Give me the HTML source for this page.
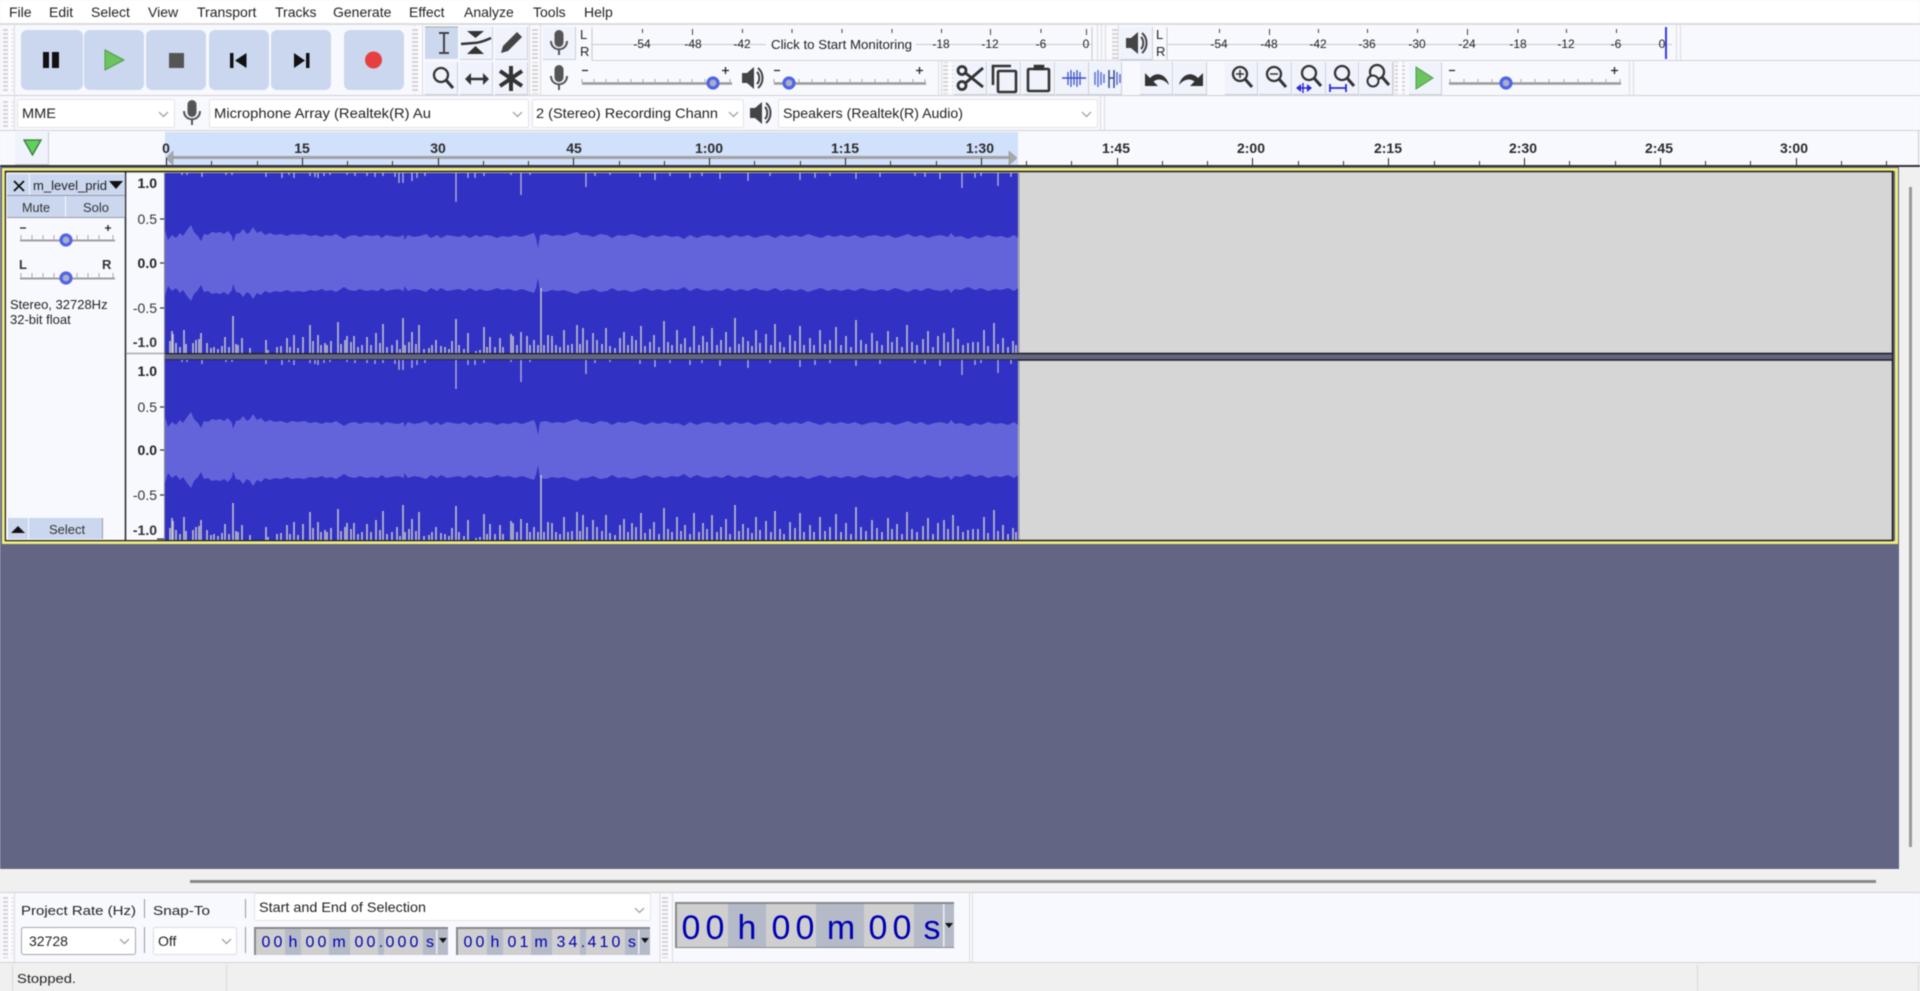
<!DOCTYPE html>
<html><head><meta charset="utf-8"><title>Audacity</title>
<style>
html,body{margin:0;padding:0;background:#f0f0f0;overflow:hidden}
svg{display:block;position:absolute;left:0;top:0;filter:blur(.4px)}
text{font-family:"Liberation Sans",sans-serif;fill:#222;font-size:13px}
.m{font-size:14px;fill:#222}
.t{font-size:14px;font-weight:bold;fill:#2a2a2a;text-anchor:middle}
.v{font-size:14px;fill:#333;text-anchor:end}
.vb{font-size:14px;fill:#222;font-weight:bold;text-anchor:end}
.mt{font-size:12px;fill:#222;text-anchor:middle}
.c{font-size:14px;fill:#222}
.d{font-size:16px;fill:#0000b4;text-anchor:middle}
.b{font-size:34px;fill:#0000b4;text-anchor:middle}
</style></head><body>
<svg width="1920" height="991" viewBox="0 0 1920 991" xmlns="http://www.w3.org/2000/svg">
<defs>
<pattern id="gr" width="10" height="4" patternUnits="userSpaceOnUse"><rect width="10" height="4" fill="#fbfbfd"/><rect x="2" y="1" width="6" height="2" fill="#d4d4d8"/></pattern>
<g id="btn"><rect width="33" height="33" fill="#f0f3fc"/><path d="M0 32.5H33M32.500 0V33" stroke="#ccd0d8" fill="none"/></g>
<g id="mic"><rect x="-4.500" y="-13" width="9" height="17" rx="4.500" fill="#555"/><path d="M-8 -2C-8 9 8 9 8 -2M0 6V12" stroke="#555" stroke-width="2" fill="none"/></g>
<g id="spk"><path d="M-10 -5H-5L2 -11V11L-5 5H-10Z" fill="#444"/><path d="M5 -6C8 -3 8 3 5 6M6 -10C12 -5 12 5 6 10" stroke="#444" stroke-width="2" fill="none"/></g>
<g id="thumb"><circle r="5" fill="#a8aecb" stroke="#5064e6" stroke-width="3.200"/></g>
<g id="zm"><circle cx="-2" cy="-3" r="7" fill="none" stroke="#333" stroke-width="2.300"/><path d="M3 2L10 10" stroke="#333" stroke-width="3"/></g>
<path id="chev" d="M0 0L4.500 4.500L9 0" fill="none" stroke="#999" stroke-width="1.200"/>
<path id="band" d="M165 263V230L168 240L172 235L176 238L180 233L183 236L187 230L191 225L194 232L198 236L201 241L204 234L208 235L212 232L216 233L220 232L224 234L228 231L232 236L233 242L236 234L240 233L243 229L247 234L250 232L253 227L257 233L261 231L265 235L270 233L275 235L281 234L287 236L292 234L298 235L304 234L310 236L316 235L322 237L326 235L331 236L336 234L341 237L344 239L349 236L355 235L360 237L366 235L372 236L378 235L382 238L386 235L391 236L398 237L404 235L404 240L408 235L414 237L420 236L426 234L431 238L437 235L441 238L447 235L453 236L459 237L464 235L470 238L476 235L480 237L486 235L492 236L497 238L502 236L509 237L515 235L522 237L528 235L534 233L536 238L538 248L540 235L546 234L552 236L558 235L564 236L570 234L577 232L581 235L587 235L593 237L600 234L607 235L612 238L618 235L625 236L632 234L639 236L645 238L652 235L658 237L665 235L672 237L678 236L684 239L690 235L697 238L702 236L708 235L715 237L722 235L728 238L735 235L741 237L748 235L755 238L761 236L768 235L775 238L781 235L788 237L795 235L801 237L808 234L814 236L821 238L828 235L834 237L841 235L848 237L855 235L862 238L868 236L875 235L882 237L888 235L895 238L902 236L908 234L915 237L921 235L928 238L934 236L941 235L948 237L951 233L955 237L961 236L968 239L975 236L981 238L988 235L995 237L1001 236L1008 238L1014 235L1018 238V263Z"/>
<path id="sp" d="M172 331V353M173 334V353M170 341V353M176 343V353M180 347V353M184 330V353M186 344V353M193 343V353M196 340V353M199 339V353M201 333V353M207 343V353M211 348V353M214 347V353M218 349V353M222 346V353M225 337V353M229 347V353M233 316V353M236 344V353M238 345V353M242 338V353M250 348V353M266 340V353M268 350V353M277 347V353M281 346V353M287 338V353M290 347V353M294 335V353M298 348V353M303 337V353M310 325V353M313 341V353M318 335V353M321 345V353M325 343V353M327 345V353M331 341V353M338 322V353M341 344V353M345 340V353M347 336V353M351 342V353M354 336V353M358 347V353M362 345V353M367 337V353M371 345V353M376 333V353M380 343V353M383 324V353M387 347V353M392 345V353M397 340V353M400 349V353M403 318V353M405 345V353M409 342V353M412 332V353M416 344V353M419 325V353M424 349V353M429 348V353M432 345V353M436 340V353M441 346V353M445 347V353M449 349V353M452 341V353M456 319V353M459 345V353M464 349V353M468 333V353M476 351V353M480 350V353M484 327V353M487 347V353M490 337V353M495 347V353M500 338V353M503 347V353M511 334V353M513 336V353M517 345V353M521 332V353M527 336V353M530 345V353M534 340V353M538 345V353M541 288V353M544 345V353M548 335V353M552 336V353M556 345V353M560 347V353M564 330V353M568 345V353M572 344V353M577 325V353M580 344V353M583 328V353M587 340V353M593 333V353M597 340V353M602 344V353M606 328V353M610 346V353M615 348V353M620 338V353M624 332V353M628 345V353M632 336V353M636 340V353M641 326V353M645 346V353M650 342V353M654 335V353M659 347V353M664 321V353M668 342V353M672 345V353M677 330V353M681 344V353M685 338V353M690 347V353M694 326V353M699 345V353M703 336V353M707 342V353M712 328V353M717 345V353M721 340V353M726 332V353M730 347V353M735 318V353M739 344V353M743 337V353M748 341V353M752 346V353M756 330V353M760 343V353M766 334V353M771 345V353M775 324V353M780 342V353M784 347V353M790 335V353M795 341V353M800 326V353M804 345V353M810 338V353M814 345V353M820 330V353M825 344V353M830 340V353M836 327V353M841 345V353M846 336V353M851 347V353M856 320V353M861 340V353M866 344V353M872 333V353M877 341V353M882 345V353M888 331V353M892 342V353M897 337V353M902 347V353M907 325V353M912 342V353M917 345V353M923 339V353M928 331V353M933 347V353M938 336V353M944 333V353M948 342V353M953 328V353M958 339V353M963 345V353M968 343V353M973 342V353M978 342V353M984 330V353M988 346V353M994 323V353M998 344V353M1003 338V353M1008 347V353M1013 341V353M1016 345V353"/>
<path id="st" d="M182 173V175M187 173V175M202 173V177M226 173V175M232 173V175M266 173V177M282 173V178M289 173V175M294 173V178M310 173V176M315 173V177M318 173V178M324 173V176M330 173V175M347 173V175M355 173V176M367 173V176M375 173V177M383 173V176M395 173V177M399 173V183M403 173V183M412 173V181M417 173V178M425 173V176M456 173V202M468 173V178M475 173V178M484 173V176M511 173V175M521 173V195M530 173V175M586 173V187M595 173V176M610 173V175M640 173V177M655 173V180M670 173V176M690 173V178M702 173V176M720 173V179M748 173V181M770 173V176M800 173V180M815 173V178M830 173V176M856 173V179M880 173V177M915 173V176M925 173V177M940 173V179M962 173V188M975 173V178M981 173V176M998 173V186M1011 173V177"/>
<g id="ch"><rect x="165" y="173" width="853" height="180" fill="#3131c4"/><use href="#band" fill="#6464da"/><use href="#band" fill="#6464da" transform="matrix(1 0 0 -1 0 526)"/><use href="#sp" stroke="#c9c9c9" stroke-width="1.500" fill="none"/><use href="#st" stroke="#b6b6dc" stroke-width="1.300" fill="none"/></g>
</defs>

<!-- base -->
<rect width="1920" height="991" fill="#f0f0f0"/>
<rect width="1920" height="23" fill="#fff"/>
<rect y="23" width="1920" height="2" fill="#dcdcdc"/>
<text class="m" x="9" y="17">File</text><text class="m" x="49" y="17">Edit</text><text class="m" x="91" y="17">Select</text><text class="m" x="148" y="17">View</text><text class="m" x="197" y="17">Transport</text><text class="m" x="275" y="17">Tracks</text><text class="m" x="333" y="17">Generate</text><text class="m" x="409" y="17">Effect</text><text class="m" x="464" y="17">Analyze</text><text class="m" x="533" y="17">Tools</text><text class="m" x="584" y="17">Help</text>

<!-- toolbars background -->
<rect y="25" width="1920" height="105" fill="#f8f9ff"/>
<path d="M0 95.500H1920M0 130.500H1920M592 60.500H1920" stroke="#d2d2d2"/>
<path d="M414.500 25V95M422.500 25V95M529.500 25V95M540.500 25V95M1097.500 25V60M1101.500 25V60M1105.500 25V60M1118.500 25V60M1680.500 25V60M1676.500 25V60M938.500 60V95M941.500 60V95M1393.500 60V95M1629.500 60V95M1633.500 60V95M1100.500 96V130M1104.500 96V130M14.500 25V130" stroke="#dcdcdc"/>
<rect x="3" y="27" width="10" height="66" fill="url(#gr)"/><rect x="3" y="99" width="10" height="28" fill="url(#gr)"/>
<rect x="412" y="27" width="10" height="66" fill="url(#gr)"/>
<rect x="530" y="27" width="10" height="32" fill="url(#gr)"/><rect x="530" y="62" width="10" height="32" fill="url(#gr)"/>
<rect x="1108" y="27" width="10" height="32" fill="url(#gr)"/><rect x="943" y="62" width="10" height="32" fill="url(#gr)"/><rect x="1395" y="62" width="10" height="32" fill="url(#gr)"/>

<!-- transport -->
<g fill="#cbd7ef"><rect x="21" y="30" width="62" height="60" rx="6"/><rect x="84" y="30" width="60" height="60" rx="6"/><rect x="146" y="30" width="60" height="60" rx="6"/><rect x="209" y="30" width="60" height="60" rx="6"/><rect x="271" y="30" width="60" height="60" rx="6"/><rect x="344" y="30" width="60" height="60" rx="6"/></g>
<path d="M43 52h6v16h-6zM52 52h7v16h-7z" fill="#111"/>
<path d="M105 50L124 60L105 70Z" fill="#6cc460" stroke="#4f9c48"/>
<rect x="169" y="53" width="15" height="15" fill="#555"/>
<path d="M230 53h3.500v15h-3.500zM246.500 53v15L235 60.500Z" fill="#111"/>
<path d="M294 53v15L305 60.500ZM306 53h3.500v15H306z" fill="#111"/>
<circle cx="373.500" cy="60" r="8.500" fill="#e5403f"/>

<!-- tools -->
<rect x="425" y="27" width="33" height="32" fill="#ccd8ee"/><path d="M425 27H458" stroke="#aaa"/>
<use href="#btn" x="460" y="27"/><use href="#btn" x="495" y="27"/><use href="#btn" x="425" y="62"/><use href="#btn" x="460" y="62"/><use href="#btn" x="495" y="62"/>
<path d="M439 33h10M439 53h10M444 33V53" stroke="#444" stroke-width="2" fill="none"/>
<path d="M467 31H484L475.500 38ZM467 54H484L475.500 46Z" fill="#333"/><path d="M461 44L474 43Q480 43 491 38" stroke="#333" stroke-width="2.500" fill="none"/>
<path d="M501 53L503 46L517 32L522 37L508 51Z" fill="#444"/>
<circle cx="441" cy="75" r="7" fill="none" stroke="#333" stroke-width="2.300"/><path d="M446 80L453 88" stroke="#333" stroke-width="3"/>
<path d="M468 79H486" stroke="#333" stroke-width="2.500"/><path d="M465 79L471 73V85ZM489 79L483 73V85Z" fill="#333"/>
<path d="M511 66V91M500 71L522 86M522 71L500 86" stroke="#333" stroke-width="4"/>

<!-- rec meter -->
<use href="#btn" x="543" y="27"/><use href="#mic" x="559" y="43"/><use href="#mic" x="559" y="78"/>
<text x="580" y="39" font-size="13">L</text><text x="580" y="56" font-size="13">R</text>
<path d="M592 44.500H1092M592 27.500V60M1092 27V60" stroke="#c8c8c8" fill="none"/>
<path d="M642.500 29V33M692.500 29V35M742.500 29V33M792 29V33M842 29V33M892 29V33M941.500 29V33M990.500 29V35M1041 29V33M1086.500 29V35" stroke="#444"/>
<rect x="766" y="36" width="150" height="16" fill="#f8f9ff"/>
<text class="mt" x="642" y="48">-54</text><text class="mt" x="693" y="48">-48</text><text class="mt" x="742" y="48">-42</text><text class="mt" x="941" y="48">-18</text><text class="mt" x="990" y="48">-12</text><text class="mt" x="1041" y="48">-6</text><text class="mt" x="1086" y="48">0</text>
<text x="771" y="49" font-size="13" textLength="141" lengthAdjust="spacingAndGlyphs">Click to Start Monitoring</text>

<!-- play meter -->
<use href="#btn" x="1120" y="27"/><use href="#spk" x="1136" y="43"/>
<text x="1156" y="39" font-size="13">L</text><text x="1156" y="56" font-size="13">R</text>
<path d="M1167 44.500H1672M1167 27.500V60" stroke="#c8c8c8" fill="none"/>
<path d="M1219.500 29V33M1269.500 29V35M1318.500 29V33M1367.500 29V33M1417.500 29V33M1467.500 29V35M1518 29V33M1566.500 29V33M1616.500 29V33" stroke="#444"/>
<text class="mt" x="1219" y="48">-54</text><text class="mt" x="1269" y="48">-48</text><text class="mt" x="1318" y="48">-42</text><text class="mt" x="1367" y="48">-36</text><text class="mt" x="1417" y="48">-30</text><text class="mt" x="1467" y="48">-24</text><text class="mt" x="1518" y="48">-18</text><text class="mt" x="1566" y="48">-12</text><text class="mt" x="1616" y="48">-6</text><text class="mt" x="1662" y="48">0</text>
<rect x="1665" y="27" width="2" height="32" fill="#3a3ae0"/>

<!-- sliders row -->
<path d="M582 83.500H732M774 83.500H926M1449 83.500H1621" stroke="#9a9a9a" stroke-width="2.500"/>
<path d="M582 83V79M594 83V79M606 83V79M618 83V79M631 83V79M643 83V79M655 83V79M668 83V79M680 83V79M692 83V79M705 83V79M717 83V79M730 83V79M774 83V79M787 83V79M799 83V79M812 83V79M825 83V79M837 83V79M850 83V79M862 83V79M875 83V79M888 83V79M900 83V79M913 83V79M925 83V79M1450 83V79M1464 83V79M1478 83V79M1492 83V79M1507 83V79M1521 83V79M1535 83V79M1549 83V79M1564 83V79M1578 83V79M1592 83V79M1606 83V79M1620 83V79" stroke="#aaa"/>
<use href="#thumb" x="713" y="83"/><use href="#thumb" x="789" y="83"/><use href="#thumb" x="1506" y="83"/>
<path d="M582 70.500h6M774 70.500h6M1449 70.500h6M722 70.500h7M725.500 67v7M916 70.500h7M919.500 67v7M1611 70.500h7M1614.500 67v7" stroke="#222" stroke-width="1.300"/>
<use href="#spk" x="752" y="78"/>

<!-- edit -->
<use href="#btn" x="954" y="62"/><use href="#btn" x="988" y="62"/><use href="#btn" x="1022" y="62"/><use href="#btn" x="1056" y="62"/><use href="#btn" x="1089" y="62"/><use href="#btn" x="1140" y="62"/><use href="#btn" x="1174" y="62"/>
<g fill="none" stroke="#333" stroke-width="2.800"><circle cx="962" cy="70.500" r="4"/><circle cx="962" cy="85.500" r="4"/><path d="M965.500 73L983 87M965.500 83L983 68"/></g>
<g fill="none" stroke="#333" stroke-width="2.600"><path d="M1011 66H993V85"/><rect x="998" y="71" width="18" height="21" rx="1"/></g>
<g fill="none" stroke="#333" stroke-width="2.600"><rect x="1028" y="69" width="21" height="22" rx="1"/><path d="M1035 69V66H1043V69Z" fill="#333"/></g>
<path d="M1062 78H1086" stroke="#3a52c8" stroke-width="1.500" fill="none"/><path d="M1068 72V85M1071 70V87M1074 72V85M1077 70V87M1080 72V85" stroke="#3a52c8" stroke-width="1.300"/>
<path d="M1095 72V85M1098 70V87M1101 72V85M1104 74V83M1117 72V85M1120 74V83" stroke="#5a70d8" stroke-width="1.500" fill="none"/><path d="M1109 70V88M1114 70V88M1109 78H1114" stroke="#3a4a8c" stroke-width="1.500"/>
<path d="M1145 73V86H1158L1153.500 81.500C1158 78 1164 79 1169 85C1167 76 1158 70 1150 78Z" fill="#333"/>
<path d="M1203 73V86H1190L1194.500 81.500C1190 78 1184 79 1179 85C1181 76 1190 70 1198 78Z" fill="#333"/>

<!-- zoom -->
<use href="#btn" x="1225" y="62"/><use href="#btn" x="1259" y="62"/><use href="#btn" x="1293" y="62"/><use href="#btn" x="1326" y="62"/><use href="#btn" x="1360" y="62"/>
<use href="#zm" x="1242" y="77"/><path d="M1236 74h8M1240 70v8" stroke="#333" stroke-width="1.500"/>
<use href="#zm" x="1276" y="77"/><path d="M1270 74h8" stroke="#333" stroke-width="1.500"/>
<use href="#zm" x="1311" y="76"/><path d="M1297 88H1311M1303 83V93" stroke="#2a2ad0" stroke-width="1.500"/><path d="M1296 88L1301 84V92ZM1312 88L1307 84V92Z" fill="#2a2ad0"/>
<use href="#zm" x="1344" y="76"/><path d="M1330 88H1346M1330 84V92M1346 84V92" stroke="#2a2ad0" stroke-width="1.800"/>
<use href="#zm" x="1379" y="75"/><circle cx="1373" cy="81" r="5.500" fill="#f0f3fc" stroke="#333" stroke-width="2"/>
<use href="#btn" x="1409" y="62"/><path d="M1416 67L1433 78L1416 89Z" fill="#6cc460" stroke="#4f9c48"/>

<!-- device -->
<g fill="#fff" stroke="#e2e2e2"><rect x="17.500" y="99.500" width="157" height="28" rx="2"/><rect x="209.500" y="99.500" width="319" height="28" rx="2"/><rect x="532.500" y="99.500" width="211" height="28" rx="2"/><rect x="778.500" y="99.500" width="319" height="28" rx="2"/></g>
<text class="c" x="22" y="118" textLength="34" lengthAdjust="spacingAndGlyphs">MME</text><text class="c" x="214" y="118" textLength="217" lengthAdjust="spacingAndGlyphs">Microphone Array (Realtek(R) Au</text><text class="c" x="536" y="118" textLength="182" lengthAdjust="spacingAndGlyphs">2 (Stereo) Recording Chann</text><text class="c" x="783" y="118" textLength="180" lengthAdjust="spacingAndGlyphs">Speakers (Realtek(R) Audio)</text>
<use href="#chev" x="159" y="112"/><use href="#chev" x="513" y="112"/><use href="#chev" x="729" y="112"/><use href="#chev" x="1082" y="112"/>
<use href="#mic" x="192" y="113"/><use href="#spk" x="760" y="113"/>

<!-- timeline -->
<rect y="131" width="1920" height="35" fill="#f8f9ff"/>
<rect x="165" y="132" width="853" height="33" fill="#d1e0fb"/>
<rect x="15" y="132" width="33" height="33" fill="#f0f3fc"/><path d="M15 164.500H48M48.500 132V165" stroke="#c8ccd4"/>
<path d="M24 140H41L32.500 155Z" fill="#5fd05a" stroke="#3c7a3c" stroke-width="1.300"/>
<path d="M1918.500 131V166" stroke="#ccc"/>
<text class="t" x="166" y="153">0</text><text class="t" x="302" y="153">15</text><text class="t" x="438" y="153">30</text><text class="t" x="574" y="153">45</text><text class="t" x="709" y="153">1:00</text><text class="t" x="845" y="153">1:15</text><text class="t" x="980" y="153">1:30</text><text class="t" x="1116" y="153">1:45</text><text class="t" x="1251" y="153">2:00</text><text class="t" x="1388" y="153">2:15</text><text class="t" x="1523" y="153">2:30</text><text class="t" x="1659" y="153">2:45</text><text class="t" x="1794" y="153">3:00</text>
<rect x="170" y="156" width="841" height="3" fill="#a2a2a2"/>
<path d="M173 151V165L166 158ZM1009 151V165L1017 158Z" fill="#a8a8a8" stroke="#888" stroke-width=".5"/>
<path d="M211.500 161V165M257.500 161V165M347.500 161V165M392.500 161V165M483.500 161V165M528.500 161V165M619.500 161V165M664.500 161V165M754.500 161V165M800.500 161V165M890.500 161V165M936.500 161V165M1026.500 161V165M1071.500 161V165M1162.500 161V165M1207.500 161V165M1298.500 161V165M1343.500 161V165M1434.500 161V165M1479.500 161V165M1569.500 161V165M1615.500 161V165M1705.500 161V165M1750.500 161V165M1841.500 161V165M1886.500 161V165" stroke="#333"/>
<path d="M166.500 158V165M302.500 158V165M438.500 158V165M573.500 158V165M709.500 158V165M845.500 158V165M981.500 158V165M1117.500 158V165M1252.500 158V165M1388.500 158V165M1524.500 158V165M1660.500 158V165M1796.500 158V165" stroke="#222"/>
<rect y="165" width="1920" height="2" fill="#333"/>

<!-- tracks area -->
<rect y="167" width="1899" height="702" fill="#626584"/>
<rect x="3.500" y="169.500" width="1893" height="373" fill="none" stroke="#f0ee7c" stroke-width="3"/>
<rect x="5.500" y="171.500" width="1887" height="369" fill="#d6d6d6" stroke="#1c1c1c" stroke-width="1.500"/>
<rect x="6" y="173" width="159" height="367" fill="#f8f9fe"/>
<path d="M125.500 172V540" stroke="#222" stroke-width="1.500"/>
<rect x="165" y="353" width="1727" height="7" fill="#626584"/><path d="M165 353.500H1892M165 360H1892" stroke="#1c1c1c" stroke-width="1.500"/>
<path d="M126 353.500H165" stroke="#aaa" stroke-width="1.500"/>
<use href="#ch"/><use href="#ch" y="187"/>
<path d="M1019 173V353M1019 361V540M164.500 173V540" stroke="#8a8a8a"/>

<!-- ruler -->
<text class="vb" x="157" y="188">1.0</text><text class="v" x="157" y="224">0.5</text><text class="vb" x="157" y="268">0.0</text><text class="v" x="157" y="313">-0.5</text><text class="v" x="157" y="347" font-weight="bold">-1.0</text>
<text class="vb" x="157" y="376">1.0</text><text class="v" x="157" y="412">0.5</text><text class="vb" x="157" y="455">0.0</text><text class="v" x="157" y="500">-0.5</text><text class="v" x="157" y="535" font-weight="bold">-1.0</text>
<path d="M160 219H164M160 263H164M160 308H164M160 407H164M160 450H164M160 495H164M157 539H164" stroke="#333" stroke-width="1.200"/>

<!-- track panel -->
<g fill="#cbd7ef"><rect x="7" y="174" width="22" height="21"/><rect x="30" y="174" width="95" height="21"/><rect x="7" y="196" width="58" height="21"/><rect x="66" y="196" width="59" height="21"/><rect x="8" y="518" width="20" height="21"/><rect x="29" y="518" width="73" height="21"/></g>
<path d="M7 217.500H125M102.500 518V539M7 195.500H125" stroke="#9a9aa6" fill="none"/>
<path d="M14 181L24 191M24 181L14 191" stroke="#111" stroke-width="1.800"/>
<text x="33" y="190" font-size="13" textLength="74" lengthAdjust="spacingAndGlyphs">m_level_prid</text>
<path d="M109 181H123L116 189Z" fill="#111"/>
<text x="22" y="212" font-size="13" textLength="28" lengthAdjust="spacingAndGlyphs" style="fill:#333">Mute</text><text x="83" y="212" font-size="13" style="fill:#333">Solo</text>
<text x="49" y="534" font-size="13" style="fill:#333">Select</text>
<path d="M11 533H25L18 526Z" fill="#111"/>
<path d="M20 240.500H115M20 278.500H115" stroke="#a0a0a0" stroke-width="2"/>
<path d="M21 240V235M32 240V235M43 240V235M54 240V235M77 240V235M88 240V235M99 240V235M113 240V235M21 278V273M32 278V273M43 278V273M54 278V273M77 278V273M88 278V273M99 278V273M113 278V273" stroke="#aaa"/>
<use href="#thumb" x="66" y="240"/><use href="#thumb" x="66" y="278"/>
<path d="M20 228h6M105 228h6M108 225v6" stroke="#222" stroke-width="1.300"/>
<text x="19" y="269" font-size="12" font-weight="bold" style="fill:#333">L</text><text x="102" y="269" font-size="12" font-weight="bold" style="fill:#333">R</text>
<text x="10" y="309" font-size="13">Stereo, 32728Hz</text><text x="10" y="324" font-size="13">32-bit float</text>

<!-- scrollbars -->
<rect x="190" y="880" width="1686" height="3" fill="#888"/>
<rect x="1909" y="187" width="3" height="660" fill="#999"/>
<path d="M0 869.500H1899" stroke="#f8f8f8"/>

<!-- selection bar -->
<rect y="892" width="1920" height="70" fill="#f8f9ff"/>
<path d="M0 892.500H1920M0 962.500H1920" stroke="#d2d2d2"/>
<path d="M14.500 892V962M660 892V962M672.500 892V962M969.500 892V962M972.500 892V962" stroke="#dcdcdc"/>
<rect x="3" y="896" width="10" height="62" fill="url(#gr)"/><rect x="661" y="896" width="10" height="62" fill="url(#gr)"/>
<text x="21" y="915" font-size="16" textLength="115" lengthAdjust="spacingAndGlyphs">Project Rate (Hz)</text><text x="153" y="915" font-size="16" textLength="57" lengthAdjust="spacingAndGlyphs">Snap-To</text>
<path d="M144.500 899V918M144.500 927V953M245.500 899V918M245.500 927V953" stroke="#999"/>
<rect x="254.500" y="893.500" width="396" height="27" rx="2" fill="#fff" stroke="#e2e2e2"/>
<text class="c" x="259" y="912" textLength="167" lengthAdjust="spacingAndGlyphs">Start and End of Selection</text><use href="#chev" x="635" y="908"/>
<rect x="21.500" y="927.500" width="114" height="27" rx="2" fill="#fff" stroke="#a8a8a8"/><text class="c" x="29" y="946">32728</text><use href="#chev" x="120" y="939"/>
<rect x="153.500" y="927.500" width="83" height="27" rx="2" fill="#fff" stroke="#dcdcdc"/><text class="c" x="158" y="946">Off</text><use href="#chev" x="222" y="939"/>

<rect x="254" y="927" width="194" height="28" fill="#888"/><rect x="256" y="929" width="192" height="26" fill="#cfcfcf"/>
<g fill="#b5bac8"><rect x="285" y="929" width="16" height="26"/><rect x="329" y="929" width="21" height="26"/><rect x="378" y="929" width="6" height="26"/><rect x="423" y="929" width="25" height="26"/></g>
<rect x="436" y="930" width="1.500" height="24" fill="#eef0f6"/><path d="M439 938H447L443 943Z" fill="#111"/>
<text class="d" x="266" y="947">0</text><text class="d" x="278" y="947">0</text><text class="d" x="293" y="947">h</text><text class="d" x="310" y="947">0</text><text class="d" x="322" y="947">0</text><text class="d" x="339" y="947">m</text><text class="d" x="359" y="947">0</text><text class="d" x="371" y="947">0</text><text class="d" x="381" y="947">.</text><text class="d" x="390" y="947">0</text><text class="d" x="402" y="947">0</text><text class="d" x="414" y="947">0</text><text class="d" x="430" y="947">s</text>
<rect x="456" y="927" width="194" height="28" fill="#888"/><rect x="458" y="929" width="192" height="26" fill="#cfcfcf"/>
<g fill="#b5bac8"><rect x="487" y="929" width="16" height="26"/><rect x="531" y="929" width="21" height="26"/><rect x="580" y="929" width="6" height="26"/><rect x="625" y="929" width="25" height="26"/></g>
<rect x="638" y="930" width="1.500" height="24" fill="#eef0f6"/><path d="M641 938H649L645 943Z" fill="#111"/>
<text class="d" x="468" y="947">0</text><text class="d" x="480" y="947">0</text><text class="d" x="495" y="947">h</text><text class="d" x="512" y="947">0</text><text class="d" x="524" y="947">1</text><text class="d" x="541" y="947">m</text><text class="d" x="561" y="947">3</text><text class="d" x="573" y="947">4</text><text class="d" x="583" y="947">.</text><text class="d" x="592" y="947">4</text><text class="d" x="604" y="947">1</text><text class="d" x="616" y="947">0</text><text class="d" x="632" y="947">s</text>

<!-- big time -->
<rect x="675" y="902" width="279" height="46" fill="#888"/><rect x="677" y="904" width="277" height="43" fill="#cfcfcf"/>
<g fill="#b5bac8"><rect x="728" y="904" width="38" height="43"/><rect x="816" y="904" width="48" height="43"/><rect x="914" y="904" width="40" height="43"/></g>
<rect x="943" y="904" width="1.500" height="43" fill="#eef0f6"/><path d="M945 923H953L949 928Z" fill="#111"/>
<text class="b" x="691" y="939">0</text><text class="b" x="715" y="939">0</text><text class="b" x="747" y="939">h</text><text class="b" x="781" y="939">0</text><text class="b" x="805" y="939">0</text><text class="b" x="841" y="939">m</text><text class="b" x="878" y="939">0</text><text class="b" x="902" y="939">0</text><text class="b" x="932" y="939">s</text>

<!-- status -->
<text x="17" y="983" font-size="15" textLength="59" lengthAdjust="spacingAndGlyphs">Stopped.</text>
<path d="M12.500 965V991M226.500 965V991M1697.500 965V991M1918.500 965V991" stroke="#d8d8d8"/>
</svg>
</body></html>
